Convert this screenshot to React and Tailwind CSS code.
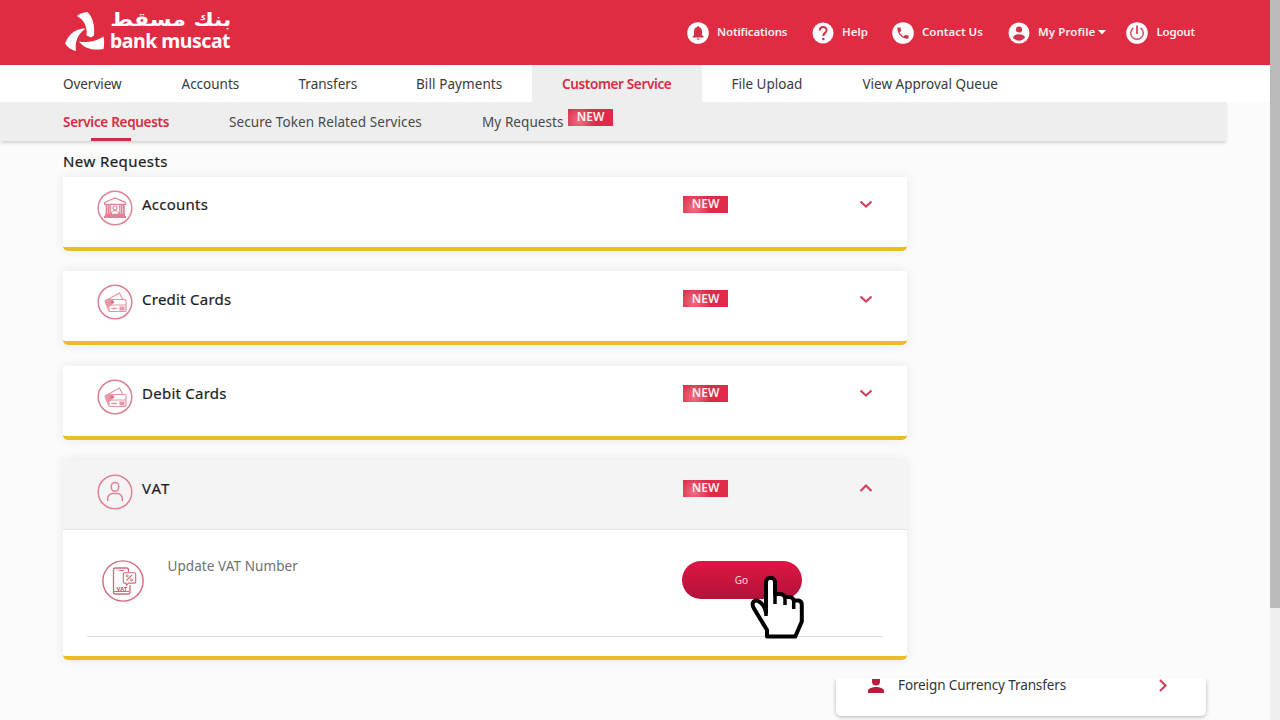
import React from "react";

function Badge() {
  return (
    <span className="flex h-[17px] w-[45px] shrink-0 items-center justify-center bg-radial-[circle_at_25%_70%] from-[#ef7084] to-[#df2a48] to-45% text-[12px] leading-[16px] font-semibold text-[#fff0f2]">
      NEW
    </span>
  );
}

function Chevron({ up, right }) {
  const d = up ? "M2.500 10 L8 4.500 L13.500 10" : right ? "M6 1 L11.500 6.500 L6 12" : "M2.500 4.500 L8 9.500 L13.500 4.500";
  return (
    <svg className="h-[14px] w-[16px] shrink-0" viewBox="0 0 16 14" fill="none" stroke="#d2425c" strokeWidth="2.2">
      <path d={d} />
    </svg>
  );
}

function Logo() {
  return (
    <svg className="h-[41px] w-[41px]" viewBox="0 0 41 41" fill="#fff">
      <path d="M13 5C15.500 3 19 1.200 23.500 1 28.500 6 31 14 30 24.500L27 26.500 22.500 24.500C23.500 16 20.500 9 13 5Z" />
      <path d="M21.500 17.500C14 17 5 21.500 1 32.500 3.500 36.500 7.500 39 12 40 10.500 30.500 14 23 21.500 17.500Z" />
      <path d="M15 30.500C23 32 32 30.500 39.500 25.500 40.500 29.500 40.300 33.500 39.500 38 30 39.500 21 38.500 15 30.500Z" />
    </svg>
  );
}

const disc = "h-[22px] w-[22px] shrink-0";

function BellIcon() {
  return (
    <svg className={disc} viewBox="0 0 22 22">
      <circle cx="11" cy="11" r="10.800" fill="#fff" />
      <path d="M5.500 15.500V14.800L7 13V9.500C7 6.800 8.500 5.300 10.200 5V4.500a.9.9 0 0 1 1.700 0V5C13.700 5.300 15 6.900 15 9.500V13l1.600 1.800v.7ZM9.600 16.400h2.900a1.450 1.450 0 0 1-2.900 0Z" fill="#d13249" />
    </svg>
  );
}

function HelpIcon() {
  return (
    <svg className={disc} viewBox="0 0 22 22">
      <circle cx="11" cy="11" r="10.500" fill="#fff" />
      <path d="M7.700 8.500C7.700 3.700 14.600 3.900 14.600 8.200 14.600 10.900 11.300 10.900 11.300 13.900" fill="none" stroke="#d13249" strokeWidth="2" />
      <circle cx="11.300" cy="17" r="1.300" fill="#d13249" />
    </svg>
  );
}

function PhoneIcon() {
  return (
    <svg className={disc} viewBox="0 0 22 22">
      <circle cx="11" cy="11" r="10.800" fill="#fff" />
      <path transform="translate(3.500 3.700) scale(.62)" d="M6.620 10.790c1.440 2.830 3.760 5.140 6.590 6.590l2.200-2.200c.27-.27.670-.36 1.020-.24 1.120.37 2.330.57 3.570.57.550 0 1 .45 1 1V20c0 .55-.45 1-1 1-9.390 0-17-7.610-17-17 0-.55.450-1 1-1h3.500c.55 0 1 .45 1 1 0 1.250.2 2.450.57 3.570.110.350.030.740-.25 1.020l-2.200 2.200z" fill="#d13249" />
    </svg>
  );
}

function ProfileIcon() {
  return (
    <svg className={disc} viewBox="0 0 22 22">
      <circle cx="11" cy="11" r="10.500" fill="#fff" />
      <circle cx="11" cy="7.500" r="3.100" fill="#d13249" />
      <path d="M4.900 15.600C5.500 13.300 8.600 12.300 11 12.300s5.500 1 6.100 3.300C15.500 17.700 13.300 18.700 11 18.700S6.500 17.700 4.900 15.600Z" fill="#d13249" />
    </svg>
  );
}

function PowerIcon() {
  return (
    <svg className={disc} viewBox="0 0 22 22" fill="none">
      <circle cx="11" cy="11" r="10.800" fill="#fff" />
      <path d="M7.300 6A6.300 6.300 0 1 0 14.700 6" stroke="#d9566a" strokeWidth="1.600" />
      <path d="M11 3.500V12" stroke="#d9566a" strokeWidth="2" />
    </svg>
  );
}

function BankIcon() {
  return (
    <svg className="h-[36px] w-[36px]" viewBox="0 0 36 36" fill="none" stroke="#de8496">
      <circle cx="18" cy="18" r="16.800" strokeWidth="1.500" />
      <path d="M7.500 12.500 18 8l10.500 4.500v1.800h-21Z" strokeWidth="1.200" />
      <path d="M9.500 15v9M11.800 15v9M24.500 15v9M26.800 15v9" strokeWidth="1.800" />
      <path d="M8 24.800h20M7 27h22" strokeWidth="2.200" />
      <circle cx="18" cy="18" r="2" strokeWidth="1.100" />
      <path d="M14.500 24.500v-1.500c0-3 7-3 7 0v1.500M13.700 15v9M22.700 15v9" strokeWidth="1" />
    </svg>
  );
}

function CardsIcon() {
  return (
    <svg className="h-[36px] w-[36px]" viewBox="0 0 36 36" fill="none" stroke="#e594a3">
      <circle cx="18" cy="18" r="16.800" strokeWidth="1.500" stroke="#dd7f92" />
      <path d="M9 16.500 22.500 9 25.500 15M8 17l3.500 9" strokeWidth="1.200" />
      <path d="M8 16.500 14 15l.5 6-4 2Z" fill="#ed9aa8" strokeWidth=".8" />
      <rect x="12" y="15.500" width="17" height="12" rx="1" strokeWidth="1.200" />
      <path d="M13 21h16" strokeWidth="1" />
      <path d="M14.500 24.500h5.500" strokeWidth="1.600" />
      <rect x="23" y="23" width="4" height="3" fill="#ed9aa8" strokeWidth="1" />
      <circle cx="15.300" cy="18" r="1.400" fill="#e07488" stroke="#e07488" />
    </svg>
  );
}

function UserIcon() {
  return (
    <svg className="h-[36px] w-[36px]" viewBox="0 0 36 36" fill="none" stroke="#e08296" strokeWidth="1.500">
      <circle cx="18" cy="18" r="16.800" />
      <rect x="14.300" y="8.500" width="7.400" height="8.800" rx="3.700" />
      <path d="M10.700 27v-2.500a5 5 0 0 1 5-5h4.600a5 5 0 0 1 5 5V27" />
    </svg>
  );
}

function VatIcon() {
  return (
    <svg className="h-[42px] w-[42px]" viewBox="0 0 42 42" fill="none" stroke="#d3697b">
      <circle cx="21" cy="21" r="20.100" strokeWidth="1.400" />
      <path d="M26.500 12V10a2 2 0 0 0-2-2h-11a2 2 0 0 0-2 2v22a2 2 0 0 0 2 2h12.500a2 2 0 0 0 2-2v-7" strokeWidth="1.300" />
      <path d="M17 10.500h5M11.500 31.500h16" strokeWidth="1.100" />
      <path d="M22.500 12.700h10a1.200 1.200 0 0 1 1.200 1.200v8a1.200 1.200 0 0 1-1.200 1.200h-6l-2 2.300-.5-2.300h-1.500a1.200 1.200 0 0 1-1.200-1.200v-8a1.200 1.200 0 0 1 1.200-1.200Z" strokeWidth="1.100" />
      <path d="m24.500 20.500 5.500-5.500" strokeWidth="1.100" />
      <circle cx="25.200" cy="15.900" r="1" />
      <circle cx="29.400" cy="19.900" r="1" />
      <text x="14.500" y="30.700" fontSize="5.800" fontWeight="700" fontFamily="Liberation Sans, sans-serif" fill="#cf4058" stroke="none">VAT</text>
    </svg>
  );
}

function HandCursor() {
  return (
    <svg className="h-[68px] w-[56px]" viewBox="0 0 56 68" fill="#fff" stroke="#000" strokeWidth="4" strokeLinejoin="round">
      <path d="M18.500 62.500V56L5.500 34.500C2 28.500 6 25 10.500 27.500 14 29.500 16.500 34 17.500 38.500V8.500C17.500 2 26.500 2 26.500 8.500V20H31.500Q35 20 36.500 23H41Q44 23 45.500 26.500H50Q53.300 27 53.300 31V47.500L47 62V62.500H18.500Z" transform="translate(-1.500 0)" />
      <path d="M16 36v6M25 19v11M35 22v9M43.700 25v10" fill="none" strokeWidth="3.500" strokeLinejoin="miter" />
    </svg>
  );
}

function CardHead({ title, Icon, open }) {
  return (
    <div className="flex h-[55px] items-center">
      <div className="ml-[33.500px] mt-[6.500px] flex w-[45.500px] shrink-0">
        <Icon />
      </div>
      <h2 className={"w-[541px] text-[15px] text-[#1c1c1c] [-webkit-text-stroke:0.2px_#1c1c1c] " + (open ? "tracking-[1px]" : "tracking-[0.250px]")}>{title}</h2>
      <Badge />
      <div className="ml-[130px] flex">
        <Chevron up={open} />
      </div>
    </div>
  );
}

const shell = "overflow-hidden rounded-b-[5px] border-b-[4px] border-[#eabd27] bg-white shadow-[0_0_12px_rgba(0,0,0,0.08)]";

export default function App() {
  return (
    <div className="relative flex h-[720px] w-[1280px] overflow-hidden bg-[#fbfbfb] font-['Noto_Sans','Open_Sans',sans-serif] whitespace-nowrap">
      <div className="flex w-[1270px] shrink-0 flex-col">
        <header className="flex h-[64.500px] shrink-0 bg-[#df2c43] text-white">
          <div className="ml-[64px] mt-[11px] flex w-[622.500px]">
            <Logo />
            <div className="ml-[5px] flex w-[121px] flex-col">
              <div dir="rtl" lang="ar" className="h-[20px] text-[19px] leading-[17px] font-bold font-['DejaVu_Sans',sans-serif]">
                <span className="inline-block origin-right scale-x-[1.160]">بنك مسقط</span>
              </div>
              <div className="text-[19.500px] leading-[20px] font-bold tracking-[-0.5px]">bank muscat</div>
            </div>
          </div>
          <nav className="mt-[22px] flex h-[22px] text-[11.500px] leading-[19px] font-semibold text-[#fff1f2]">
            <a className="flex w-[125.500px] gap-[8.500px] tracking-[-0.140px]"><BellIcon />Notifications</a>
            <a className="flex w-[80px] gap-[8px]"><HelpIcon />Help</a>
            <a className="flex w-[116px] gap-[8px]"><PhoneIcon />Contact Us</a>
            <a className="flex w-[118px] gap-[8px]">
              <ProfileIcon />
              <span className="tracking-[0.1px]">My Profile</span>
              <svg className="-ml-[5px] mt-[8px] h-[5px] w-[8px]" viewBox="0 0 8 5" fill="#fff"><path d="M0 0h8L4 4.500Z" /></svg>
            </a>
            <a className="flex gap-[8.500px] tracking-[-0.2px]"><PowerIcon />Logout</a>
          </nav>
        </header>

        <nav className="flex h-[37.500px] shrink-0 bg-white pl-[63px] text-[13.500px] leading-[38px] text-[#3a3a3a]">
          <a className="w-[118.500px] tracking-[-0.050px]">Overview</a>
          <a className="w-[117px]">Accounts</a>
          <a className="w-[117.500px]">Transfers</a>
          <a className="w-[116px] tracking-[0.080px]">Bill Payments</a>
          <a className="w-[169.500px] bg-[#eeeeee] pl-[30px] font-semibold tracking-[-0.350px] text-[#d72c44]">Customer Service</a>
          <a className="w-[131px] pl-[30px]">File Upload</a>
          <a className="pl-[30px]">View Approval Queue</a>
        </nav>

        <nav className="flex h-[39px] w-[1227px] shrink-0 bg-[#eeeeee] pl-[63px] text-[13.500px] leading-[40px] text-[#484848] shadow-[0_3px_3px_-1px_rgba(0,0,0,0.16)]">
          <div className="flex w-[166px] flex-col font-semibold text-[#d72c44]">
            <span className="h-[36px] tracking-[-0.300px]">Service Requests</span>
            <span className="ml-[28px] h-[2.500px] w-[40px] bg-[#cf2c45]" />
          </div>
          <a className="w-[253px] tracking-[0.080px]">Secure Token Related Services</a>
          <a className="w-[86px] tracking-[0.080px]">My Requests</a>
          <div className="mt-[6.500px]"><Badge /></div>
        </nav>

        <h1 className="ml-[63px] mt-[7px] h-[28.800px] shrink-0 text-[15px] leading-[26px] tracking-[0.420px] text-[#1c1c1c] [-webkit-text-stroke:0.2px_#1c1c1c]">New Requests</h1>

        <main className="ml-[63px] flex h-[483px] w-[844px] shrink-0 flex-col gap-[20.700px]">
          <section className={"h-[73.800px] shrink-0 " + shell}><CardHead title="Accounts" Icon={BankIcon} /></section>
          <section className={"h-[73.800px] shrink-0 " + shell}><CardHead title="Credit Cards" Icon={CardsIcon} /></section>
          <section className={"h-[73.800px] shrink-0 " + shell}><CardHead title="Debit Cards" Icon={CardsIcon} /></section>
          <section className={"h-[199.700px] shrink-0 " + shell}>
            <div className="h-[70px] border-b border-[#e4e4e4] bg-[#f4f4f4] pt-[0.500px]">
              <CardHead title="VAT" Icon={UserIcon} open />
            </div>
            <div className="mx-[24px] flex h-[106.500px] border-b border-[#dddddd] pl-[15px]">
              <div className="mt-[30px] w-[65.500px] shrink-0"><VatIcon /></div>
              <span className="mt-[26px] w-[514px] text-[13.500px] leading-[20px] tracking-[0.080px] text-[#707070]">Update VAT Number</span>
              <button className="mt-[30.500px] h-[38px] w-[120px] rounded-full bg-linear-to-b from-[#df1646] to-[#b21238] pt-[2px] text-[10px] text-[#ffdce4]">Go</button>
            </div>
          </section>
        </main>

        <aside className="ml-[828px] mt-[19.200px] h-[41px] w-[390px] shrink-0 overflow-hidden px-[8px]">
          <div className="flex h-[37.500px] w-[370px] rounded-b-[5px] bg-white pl-[32px] shadow-[0_1px_4px_rgba(0,0,0,0.28)]">
            <svg className="h-[15px] w-[16px]" viewBox="0 0 16 15" fill="#b91c3e">
              <path d="M4 0h8v2.500A4 4 0 0 1 4 2.500ZM0 14v-2C0 9 5 8 8 8s8 1 8 4v2Z" />
            </svg>
            <span className="ml-[14px] w-[256px] text-[13.500px] leading-[13px] tracking-[-0.120px] text-[#333333]">Foreign Currency Transfers</span>
            <Chevron right />
          </div>
        </aside>
      </div>
      <div className="h-[720px] w-[10px] shrink-0 bg-[#f0f0f0]"><div className="h-[608px] bg-[#bbbbbb]" /></div>
      <div className="absolute left-[750px] top-[574px]"><HandCursor /></div>
    </div>
  );
}
